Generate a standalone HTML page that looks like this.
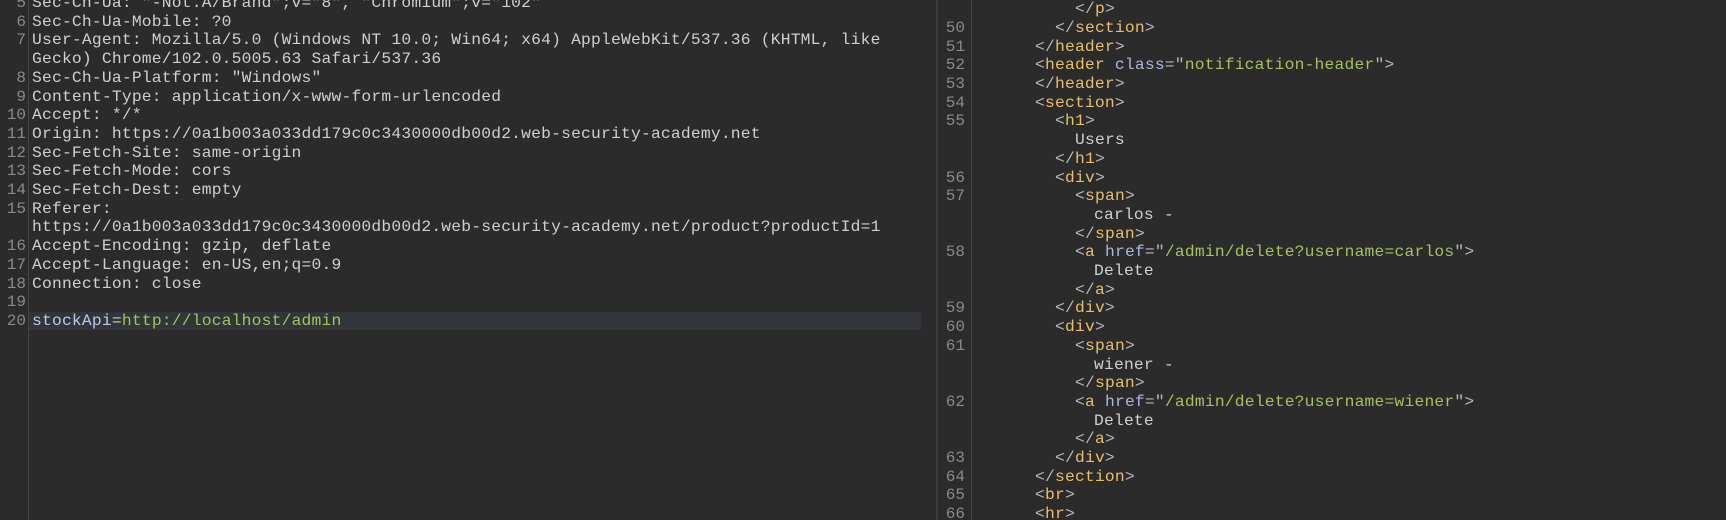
<!DOCTYPE html>
<html><head><meta charset="utf-8"><style>
html,body{margin:0;padding:0;background:#2b2b2b;width:1726px;height:520px;overflow:hidden}
body{position:relative;font-family:"Liberation Mono",monospace;font-size:16px;color:#cfcfcf}
.r{position:absolute;height:18.7px;line-height:18.7px;white-space:pre;letter-spacing:0.2px;transform:scaleX(1.0185);transform-origin:0 0}
.n{position:absolute;height:18.7px;line-height:18.7px;text-align:right;color:#8a8a8a;white-space:pre}
.t{color:#e8bf6a}.b{color:#b8b8b8}.a{color:#a9b7e0}.v{color:#a5c25c}.k{color:#c0c6f0}
</style></head><body>
<div style="position:absolute;left:28px;top:0;width:1px;height:520px;background:#444"></div>
<div style="position:absolute;left:29px;top:312px;width:892px;height:18px;background:#323539"></div>
<div style="position:absolute;left:936px;top:0;width:2px;height:520px;background:#3c3c3c"></div>
<div style="position:absolute;left:971px;top:0;width:1px;height:520px;background:#444"></div>
<div id="L"></div><div id="R"></div>
<script>
var L=[["5",'Sec-Ch-Ua: "-Not.A/Brand";v="8", "Chromium";v="102"'],["6","Sec-Ch-Ua-Mobile: ?0"],["7","User-Agent: Mozilla/5.0 (Windows NT 10.0; Win64; x64) AppleWebKit/537.36 (KHTML, like"],["","Gecko) Chrome/102.0.5005.63 Safari/537.36"],["8",'Sec-Ch-Ua-Platform: "Windows"'],["9","Content-Type: application/x-www-form-urlencoded"],["10","Accept: */*"],["11","Origin: https://0a1b003a033dd179c0c3430000db00d2.web-security-academy.net"],["12","Sec-Fetch-Site: same-origin"],["13","Sec-Fetch-Mode: cors"],["14","Sec-Fetch-Dest: empty"],["15","Referer:"],["","https://0a1b003a033dd179c0c3430000db00d2.web-security-academy.net/product?productId=1"],["16","Accept-Encoding: gzip, deflate"],["17","Accept-Language: en-US,en;q=0.9"],["18","Connection: close"],["19",""],["20",'<span class="k">stockApi</span>=<span class="v">http://localhost/admin</span>']];
var h="";
L.forEach(function(x,i){var y=-6+i*18.7;h+='<div class="n" style="left:0;width:26px;top:'+y+'px">'+x[0]+'</div><div class="r" style="left:32px;top:'+y+'px">'+(x[1].indexOf("<span")==0?x[1]:x[1].replace(/&/g,"&amp;").replace(/</g,"&lt;"))+'</div>';});
document.getElementById("L").innerHTML=h;
function T(n,c){return '<span class="b">&lt;'+(c?'/':'')+'</span><span class="t">'+n+'</span>';}
var G='<span class="b">&gt;</span>';
function A(n,v){return ' <span class="a">'+n+'</span><span class="b">="</span><span class="v">'+v+'</span><span class="b">"</span>';}
var R=[["",8,T("p",1)+G],["50",7,T("section",1)+G],["51",6,T("header",1)+G],["52",6,T("header")+A("class","notification-header")+G],["53",6,T("header",1)+G],["54",6,T("section")+G],["55",7,T("h1")+G],["",8,"Users"],["",7,T("h1",1)+G],["56",7,T("div")+G],["57",8,T("span")+G],["",9,"carlos -"],["",8,T("span",1)+G],["58",8,T("a")+A("href","/admin/delete?username=carlos")+G],["",9,"Delete"],["",8,T("a",1)+G],["59",7,T("div",1)+G],["60",7,T("div")+G],["61",8,T("span")+G],["",9,"wiener -"],["",8,T("span",1)+G],["62",8,T("a")+A("href","/admin/delete?username=wiener")+G],["",9,"Delete"],["",8,T("a",1)+G],["63",7,T("div",1)+G],["64",6,T("section",1)+G],["65",6,T("br")+G],["66",6,T("hr")+G]];
h="";
R.forEach(function(x,i){var y=0.2+i*18.7;var sp=6+(x[1]-6)*2;h+='<div class="n" style="left:930px;width:35px;top:'+y+'px">'+x[0]+'</div><div class="r" style="left:'+(976+sp*9.85)+'px;top:'+y+'px">'+x[2]+'</div>';});
document.getElementById("R").innerHTML=h;
</script>
</body></html>
